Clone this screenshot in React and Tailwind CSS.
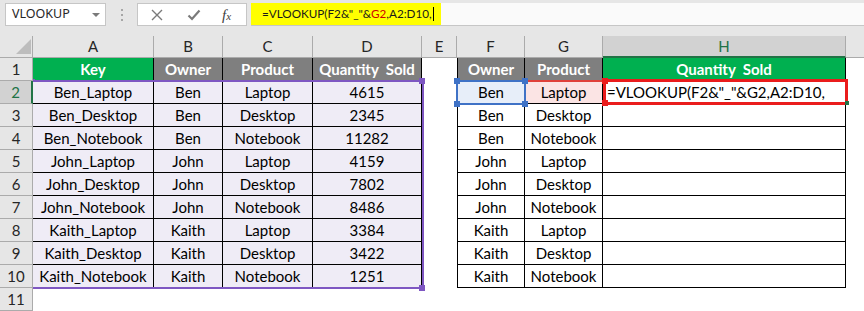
import React from 'react';

// sheet data, rows 2..10
const rows = [
  ['Ben_Laptop', 'Ben', 'Laptop', '4615', 'Ben', 'Laptop'],
  ['Ben_Desktop', 'Ben', 'Desktop', '2345', 'Ben', 'Desktop'],
  ['Ben_Notebook', 'Ben', 'Notebook', '11282', 'Ben', 'Notebook'],
  ['John_Laptop', 'John', 'Laptop', '4159', 'John', 'Laptop'],
  ['John_Desktop', 'John', 'Desktop', '7802', 'John', 'Desktop'],
  ['John_Notebook', 'John', 'Notebook', '8486', 'John', 'Notebook'],
  ['Kaith_Laptop', 'Kaith', 'Laptop', '3384', 'Kaith', 'Laptop'],
  ['Kaith_Desktop', 'Kaith', 'Desktop', '3422', 'Kaith', 'Desktop'],
  ['Kaith_Notebook', 'Kaith', 'Notebook', '1251', 'Kaith', 'Notebook'],
];

const letters = ['A', 'B', 'C', 'D', 'E', 'F', 'G', 'H'];

const cellFont = { fontFamily: 'Lato, "Liberation Sans", sans-serif' };

function Toolbar() {
  return (
    <div className="flex h-[36px] items-start bg-[#e6e6e6] pt-[3px]">
      <div
        className="ml-[5px] flex h-[23px] w-[101px] items-center justify-between border border-[#c6c6c6] bg-white pl-[6px] pr-[5px] text-[12.5px] text-[#262626]"
        style={{ fontFamily: '"Noto Sans", "Open Sans", sans-serif' }}
      >
        <span>VLOOKUP</span>
        <span className="h-0 w-0 border-x-[4px] border-t-[4px] border-x-transparent border-t-[#7a7a7a]" />
      </div>
      <div className="flex w-[31px] flex-col items-center gap-[3px] pt-[6px]">
        <span className="h-[2px] w-[2px] bg-[#a6a6a6]" />
        <span className="h-[2px] w-[2px] bg-[#a6a6a6]" />
        <span className="h-[2px] w-[2px] bg-[#a6a6a6]" />
      </div>
      <div className="flex h-[23px] w-[110px] items-center border border-[#c6c6c6] bg-white">
        <svg width="12" height="12" viewBox="0 0 12 12" className="ml-[13px]">
          <path d="M1 1 L11 11 M11 1 L1 11" stroke="#7a7a7a" strokeWidth="1.4" fill="none" />
        </svg>
        <svg width="14" height="12" viewBox="0 0 14 12" className="ml-[24px]">
          <path d="M1.5 6.5 L5 10 L12.5 1.5" stroke="#7a7a7a" strokeWidth="2.2" fill="none" />
        </svg>
        <span
          className="ml-[21px] italic text-[#404040]"
          style={{ fontFamily: '"Liberation Serif", serif' }}
        >
          <span className="text-[15px]">f</span>
          <span className="text-[11px]">x</span>
        </span>
      </div>
      <div className="ml-[4px] flex h-[23px] flex-1 border-b border-[#c6c6c6] bg-[#fafafa]">
        <div
          className="flex h-full w-[190px] items-center bg-[#ffff00] pl-[11px] text-[11.7px] text-[#1a1a1a]"
          style={cellFont}
        >
          <span>=VLOOKUP(F2&amp;"_"&amp;</span>
          <span className="text-[#d00000]">G2</span>
          <span>,A2:D10,</span>
          <span className="ml-[1px] h-[14px] w-[1px] bg-black" />
        </div>
      </div>
    </div>
  );
}

function ColumnHeaders() {
  return (
    <>
      <div className="relative border-b border-r border-[#ababab] bg-[#e6e6e6]">
        <svg width="33" height="22" viewBox="0 0 33 22" className="absolute left-0 top-0">
          <polygon points="31,3 31,18 16,18" fill="#bdbdbd" />
        </svg>
      </div>
      {letters.map((l) =>
        l === 'H' ? (
          <div
            key={l}
            className="flex items-center justify-center border-b-2 border-r border-b-[#217346] border-r-[#ababab] bg-[#d2d2d2] text-[15px] text-[#217346]"
            style={cellFont}
          >
            {l}
          </div>
        ) : (
          <div
            key={l}
            className="flex items-center justify-center border-b border-r border-[#ababab] bg-[#e6e6e6] text-[15px] text-[#262626]"
            style={cellFont}
          >
            {l}
          </div>
        )
      )}
      <div className="border-b border-[#ababab] bg-[#e6e6e6]" />
    </>
  );
}

function RowHeader({ n }) {
  if (n === 2) {
    return (
      <div
        className="flex items-center justify-center border-b border-r-2 border-b-[#ababab] border-r-[#217346] bg-[#d2d2d2] text-[15px] text-[#217346]"
        style={cellFont}
      >
        {n}
      </div>
    );
  }
  return (
    <div
      className="flex items-center justify-center border-b border-r border-[#ababab] bg-[#e6e6e6] text-[15px] text-[#262626]"
      style={cellFont}
    >
      {n}
    </div>
  );
}

function HeaderRow() {
  const hd = 'flex items-center justify-center border-r border-b border-black text-[15px] font-bold text-white';
  return (
    <>
      <RowHeader n={1} />
      <div className={`${hd} bg-[#00b050]`}>Key</div>
      <div className={`${hd} bg-[#7f7f7f]`}>Owner</div>
      <div className={`${hd} bg-[#7f7f7f]`}>Product</div>
      <div className={`${hd} bg-[#7f7f7f] whitespace-pre`}>Quantity  Sold</div>
      <div className="bg-white" />
      <div className={`${hd} border-l bg-[#7f7f7f]`}>Owner</div>
      <div className={`${hd} bg-[#7f7f7f]`}>Product</div>
      <div className={`${hd} bg-[#00b050] whitespace-pre`}>Quantity  Sold</div>
      <div className="bg-white" />
    </>
  );
}

function DataRow({ n, r }) {
  const c = 'flex items-center justify-center border-r border-b border-black text-[15px] text-black';
  const lav = 'bg-[#efecf6]';
  return (
    <>
      <RowHeader n={n} />
      <div className={`${c} ${lav} whitespace-nowrap`}>{r[0]}</div>
      <div className={`${c} ${lav}`}>{r[1]}</div>
      <div className={`${c} ${lav}`}>{r[2]}</div>
      <div className={`${c} ${lav}`}>{r[3]}</div>
      <div className="bg-white" />
      <div className={`${c} border-l ${n === 2 ? 'bg-[#e7eef9]' : 'bg-white'}`}>{r[4]}</div>
      <div className={`${c} ${n === 2 ? 'bg-[#fbe4e4]' : 'bg-white'}`}>{r[5]}</div>
      <div className={`${c} justify-start whitespace-nowrap bg-white pl-[4px]`}>
        {n === 2 ? '=VLOOKUP(F2&"_"&G2,A2:D10,' : ''}
      </div>
      <div className="bg-white" />
    </>
  );
}

function Handle({ className }) {
  return <div className={`absolute h-[6px] w-[6px] ${className}`} />;
}

export default function App() {
  return (
    <div className="h-[311px] w-[864px] overflow-hidden bg-white" style={cellFont}>
      <Toolbar />
      <div className="relative">
        <div className="grid grid-cols-[33px_121px_69px_90px_109px_35px_68px_78px_243px_1fr] grid-rows-[22px_repeat(11,23px)]">
          <ColumnHeaders />
          <HeaderRow />
          {rows.map((r, i) => (
            <DataRow key={i} n={i + 2} r={r} />
          ))}
          <RowHeader n={11} />
          <div className="col-span-9 bg-white" />
        </div>

        {/* A2:D10 reference marquee */}
        <div className="pointer-events-none absolute left-[33px] top-[44px] h-[209px] w-[391px] border-b-2 border-r-2 border-t-2 border-[#7e57c2]" />
        <div className="absolute left-[33px] top-[43px] h-[3px] w-[2px] bg-[#7e57c2]" />
        <Handle className="left-[419px] top-[42px] bg-[#7e57c2]" />
        <Handle className="left-[419px] top-[249px] bg-[#7e57c2]" />

        {/* G2 reference */}
        <div className="pointer-events-none absolute left-[525px] top-[44px] h-[25px] w-[79px] border-t-2 border-[#e0403a]" />

        {/* F2 reference */}
        <div className="pointer-events-none absolute left-[456px] top-[44px] h-[25px] w-[70px] border-2 border-[#3f72c6]" />
        <Handle className="left-[454px] top-[42px] bg-[#3f72c6]" />
        <Handle className="left-[522px] top-[42px] bg-[#3f72c6]" />
        <Handle className="left-[454px] top-[65px] bg-[#3f72c6]" />
        <Handle className="left-[522px] top-[65px] bg-[#3f72c6]" />

        {/* active cell H2 */}
        <div className="pointer-events-none absolute left-[603px] top-[43px] h-[26px] w-[245px] border-[3px] border-[#ea1c1c]" />
        <Handle className="left-[602px] top-[42px] bg-[#ea1c1c]" />
        <Handle className="left-[602px] top-[64px] bg-[#ea1c1c]" />
        <div className="absolute left-[845px] top-[65px] h-[4px] w-[4px] bg-[#217346]" />
      </div>
    </div>
  );
}
